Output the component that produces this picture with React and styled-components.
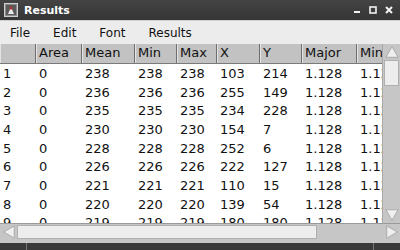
import React from "react";
import styled, { createGlobalStyle } from "styled-components";

const GlobalStyle = createGlobalStyle`
  html, body {
    margin: 0;
    padding: 0;
    background: #3a3a3a;
  }
  body {
    font-family: "DejaVu Sans", sans-serif;
  }
`;

const columns = [
  { name: "", width: 36 },
  { name: "Area", width: 46 },
  { name: "Mean", width: 53 },
  { name: "Min", width: 42 },
  { name: "Max", width: 40 },
  { name: "X", width: 43 },
  { name: "Y", width: 42 },
  { name: "Major", width: 55 },
  { name: "Minor", width: 60 },
];

const rows = [
  [1, 0, 238, 238, 238, 103, 214, "1.128", "1.128"],
  [2, 0, 236, 236, 236, 255, 149, "1.128", "1.128"],
  [3, 0, 235, 235, 235, 234, 228, "1.128", "1.128"],
  [4, 0, 230, 230, 230, 154, 7, "1.128", "1.128"],
  [5, 0, 228, 228, 228, 252, 6, "1.128", "1.128"],
  [6, 0, 226, 226, 226, 222, 127, "1.128", "1.128"],
  [7, 0, 221, 221, 221, 110, 15, "1.128", "1.128"],
  [8, 0, 220, 220, 220, 139, 54, "1.128", "1.128"],
  [9, 0, 219, 219, 219, 180, 180, "1.128", "1.128"],
];

const gridCols = columns.map((c) => c.width + "px").join(" ");

const App = () => {
  return (
    <>
      <GlobalStyle />
      <Window>
        <TitleBar>
          <AppIcon viewBox="0 0 14 14">
            <rect x="0.5" y="0.5" width="13" height="13" fill="#8a8a8a" stroke="#cfcfcf" />
            <rect x="2" y="2" width="10" height="10" fill="#5a5a5a" />
            <path d="M4 11 L7 4 L10 11 Z" fill="#e8e8e8" />
            <circle cx="7" cy="5" r="1.6" fill="#b03030" />
          </AppIcon>
          <Title>Results</Title>
          <Controls>
            <svg width="8" height="8" viewBox="0 0 8 8">
              <rect x="1" y="5" width="6" height="2" fill="#f2f2f2" />
            </svg>
            <svg width="8" height="8" viewBox="0 0 8 8">
              <rect x="1" y="1" width="6" height="6" fill="none" stroke="#f2f2f2" strokeWidth="1.6" />
            </svg>
            <svg width="8" height="8" viewBox="0 0 8 8">
              <path d="M1 1 L7 7 M7 1 L1 7" stroke="#f2f2f2" strokeWidth="2" />
            </svg>
          </Controls>
        </TitleBar>
        <MenuBar>
          <MenuItem>File</MenuItem>
          <MenuItem>Edit</MenuItem>
          <MenuItem>Font</MenuItem>
          <MenuItem>Results</MenuItem>
        </MenuBar>
        <Body>
          <TableArea>
            <Table>
              <HeaderRow>
                {columns.map((c, i) => (
                  <HeaderCell key={i}>{c.name}</HeaderCell>
                ))}
              </HeaderRow>
              {rows.map((r, i) => (
                <Row key={i}>
                  {r.map((v, j) => (
                    <Cell key={j}>{v}</Cell>
                  ))}
                </Row>
              ))}
            </Table>
            <VScroll>
              <ArrowBox>
                <Arrow viewBox="0 0 16 16">
                  <path d="M1 14 L8 2 L15 14 Z" fill="#efefef" stroke="#9a9a9a" strokeWidth="0.8" />
                </Arrow>
              </ArrowBox>
              <VThumb />
              <Track />
              <ArrowBox>
                <Arrow viewBox="0 0 16 16">
                  <path d="M1 2 L8 14 L15 2 Z" fill="#efefef" stroke="#9a9a9a" strokeWidth="0.8" />
                </Arrow>
              </ArrowBox>
            </VScroll>
          </TableArea>
          <HScroll>
            <ArrowBox>
              <Arrow viewBox="0 0 16 16">
                <path d="M2 8 L14 1 L14 15 Z" fill="#efefef" stroke="#9a9a9a" strokeWidth="0.8" />
              </Arrow>
            </ArrowBox>
            <HThumb />
            <Track />
            <ArrowBox>
              <Arrow viewBox="0 0 16 16">
                <path d="M14 8 L2 1 L2 15 Z" fill="#efefef" stroke="#9a9a9a" strokeWidth="0.8" />
              </Arrow>
            </ArrowBox>
          </HScroll>
        </Body>
        <BottomEdge>
          <Grip />
          <Grip />
        </BottomEdge>
      </Window>
    </>
  );
};

//styled

const Window = styled.div`
  width: 400px;
  height: 250px;
  display: flex;
  flex-direction: column;
  overflow: hidden;
  background: #c8c8c8;
`;

const TitleBar = styled.div`
  height: 20px;
  display: flex;
  align-items: center;
  padding: 0 4px;
  background: linear-gradient(#444444, #353535);
  border-bottom: 1px solid #d0d0d0;
`;

const AppIcon = styled.svg`
  width: 14px;
  height: 14px;
  margin-right: 6px;
`;

const Title = styled.span`
  color: #ffffff;
  font-weight: bold;
  font-size: 11px;
  flex: 1;
`;

const Controls = styled.div`
  display: flex;
  gap: 8px;
  margin-right: 3px;
  align-items: center;
`;

const MenuBar = styled.div`
  height: 23px;
  display: flex;
  align-items: center;
  background: #ececec;
  padding-left: 10px;
`;

const MenuItem = styled.span`
  font-size: 12px;
  color: #111;
  margin-right: 23px;
`;

const Body = styled.div`
  flex: 1;
  display: flex;
  flex-direction: column;
  min-height: 0;
`;

const TableArea = styled.div`
  flex: 1;
  display: flex;
  min-height: 0;
`;

const Table = styled.div`
  flex: 1;
  background: #ffffff;
  overflow: hidden;
  min-width: 0;
`;

const HeaderRow = styled.div`
  display: grid;
  grid-template-columns: ${gridCols};
  height: 19px;
  background: #c2c2c2;
  border-bottom: 1px solid #7a7a7a;
`;

const HeaderCell = styled.div`
  font-size: 13px;
  line-height: 18px;
  padding-left: 2px;
  color: #111;
  border-right: 1px solid #6e6e6e;
  border-left: 1px solid #e4e4e4;
  white-space: nowrap;
  overflow: hidden;
`;

const Row = styled.div`
  display: grid;
  grid-template-columns: ${gridCols};
  height: 18.7px;
  align-items: center;
`;

const Cell = styled.div`
  font-size: 13px;
  padding-left: 3px;
  color: #111;
  white-space: nowrap;
  overflow: hidden;
`;

const VScroll = styled.div`
  width: 17px;
  display: flex;
  flex-direction: column;
  background: #c6c6c6;
  border-left: 1px solid #a8a8a8;
`;

const HScroll = styled.div`
  height: 16px;
  display: flex;
  background: #c6c6c6;
  border-top: 1px solid #9a9a9a;
`;

const ArrowBox = styled.div`
  width: 17px;
  height: 16px;
  display: flex;
  align-items: center;
  justify-content: center;
  flex-shrink: 0;
`;

const Arrow = styled.svg`
  width: 14px;
  height: 14px;
`;

const VThumb = styled.div`
  height: 24px;
  margin: 0 1px;
  background: #ededed;
  border: 1px solid #b0b0b0;
`;

const HThumb = styled.div`
  width: 298px;
  margin: 1px 0;
  background: #ededed;
  border: 1px solid #b0b0b0;
`;

const Track = styled.div`
  flex: 1;
`;

const BottomEdge = styled.div`
  height: 7px;
  border-top: 3px solid #c8c8c8;
  background: #3a3a3a;
  display: flex;
  justify-content: space-between;
  padding: 0 26px;
`;

const Grip = styled.div`
  width: 1px;
  background: #777;
`;

export default App;
